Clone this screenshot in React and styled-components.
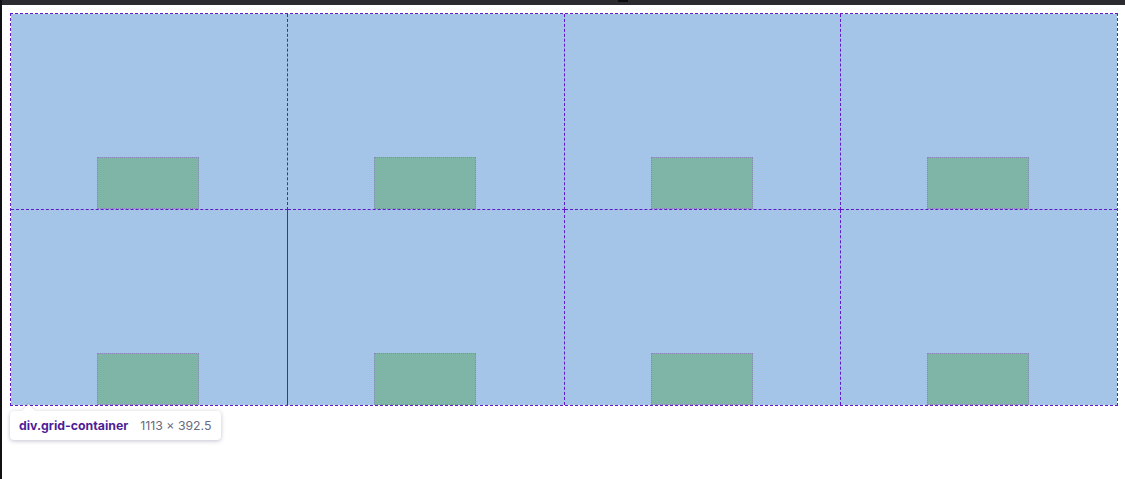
import React from 'react'
import styled, { createGlobalStyle } from 'styled-components'

const GlobalStyle = createGlobalStyle`
    html, body {
        margin: 0;
        padding: 0;
        background: #ffffff;
        font-family: "Inter", "Liberation Sans", sans-serif;
    }
    * {
        box-sizing: border-box;
    }
`

const Pagina = styled.div`
    position: relative;
    width: 1125px;
    height: 479px;
    border-left: 2px solid #111113;
    display: flex;
    flex-direction: column;
    overflow: hidden;
`

const BarraTopo = styled.div`
    height: 5px;
    background: #2c2b30;
    display: flex;
    justify-content: center;
`

const Entalhe = styled.div`
    width: 10px;
    height: 2px;
    margin-left: 118px;
    background: #0d0d0f;
`

const Conteudo = styled.div`
    position: relative;
    padding: 8px 7px 0 8px;
`

const GridContainer = styled.div`
    display: grid;
    grid-template-columns: 277px 277px 276px 276px;
    grid-template-rows: 196px 195px;
    width: 1108px;
    border: 1px dashed #6119c9;
`

const Celula = styled.div`
    background: #a4c5e8;
    display: flex;
    align-items: flex-end;
    justify-content: center;
    border-right: ${p => (p.ultimaColuna ? 'none' : `1px ${p.solida ? 'solid' : 'dashed'} #6119c9`)};
    border-bottom: ${p => (p.primeiraLinha ? '1px dashed #6119c9' : 'none')};
`

const Item = styled.div`
    width: 102px;
    height: 52px;
    margin-right: 2px;
    background: #7fb5a6;
    border: 1px dotted #8c86bd;
`

const Dica = styled.div`
    position: absolute;
    left: 8px;
    top: 406px;
    height: 29px;
    padding: 0 10px 0 9px;
    display: flex;
    align-items: center;
    gap: 12px;
    background: #ffffff;
    border-radius: 4px;
    box-shadow: 0 1px 4px rgba(40, 30, 80, 0.28);
    font-size: 12.3px;
    white-space: nowrap;

    &::before {
        content: '';
        position: absolute;
        left: 14px;
        top: -5px;
        width: 9px;
        height: 9px;
        background: #ffffff;
        transform: rotate(45deg);
        box-shadow: -1px -1px 2px rgba(40, 30, 80, 0.12);
    }
`

const NomeElemento = styled.span`
    position: relative;
    color: #4e1d96;
    font-weight: 700;
`

const Medidas = styled.span`
    position: relative;
    color: #6a6a80;
`

export default function App() {
    const celulas = []
    for (let i = 0; i < 8; i++) {
        celulas.push(
            <Celula
                key={i}
                primeiraLinha={i < 4}
                ultimaColuna={i % 4 === 3}
                solida={i === 4}
            >
                <Item />
            </Celula>
        )
    }
    return (
        <Pagina>
            <GlobalStyle />
            <BarraTopo>
                <Entalhe />
            </BarraTopo>
            <Conteudo>
                <GridContainer className="grid-container">
                    {celulas}
                </GridContainer>
                <Dica>
                    <NomeElemento>div.grid-container</NomeElemento>
                    <Medidas>1113 × 392.5</Medidas>
                </Dica>
            </Conteudo>
        </Pagina>
    )
}
